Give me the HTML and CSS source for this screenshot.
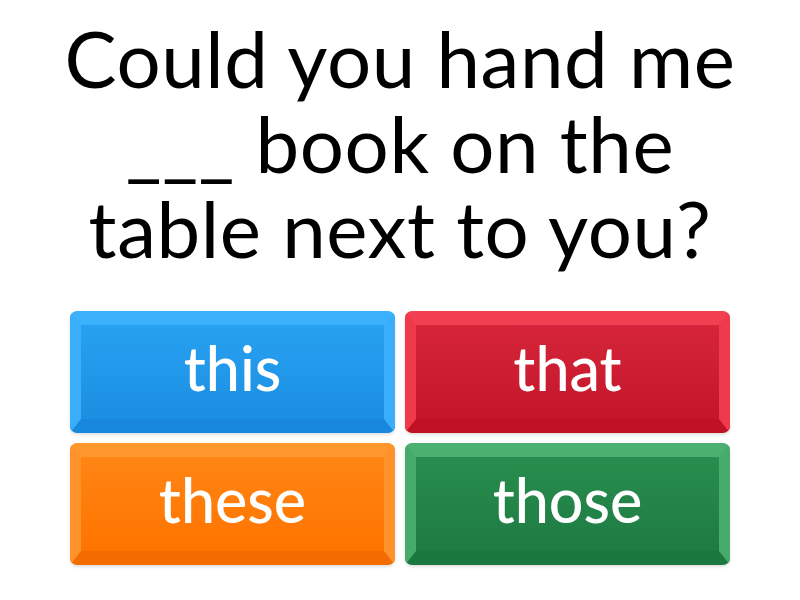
FILE: index.html
```html
<!DOCTYPE html>
<html lang="en">
<head>
<meta charset="utf-8">
<title>Quiz</title>
<link rel="stylesheet" href="styles.css">
</head>
<body>
<main class="quiz">
  <h1 class="question">Could you hand me<br>___ book on the<br>table next to you?</h1>
  <div class="answers">
    <button class="answer blue">this</button>
    <button class="answer red">that</button>
    <button class="answer orange">these</button>
    <button class="answer green">those</button>
  </div>
</main>
</body>
</html>
```
FILE: styles.css
```css
html, body {
  margin: 0;
  padding: 0;
  background: #ffffff;
}

.quiz {
  width: 800px;
  height: 600px;
  display: flex;
  flex-direction: column;
  align-items: center;
  font-family: Lato, "Noto Sans", sans-serif;
}

.question {
  margin: 16px 0 0;
  height: 295px;
  font-weight: 400;
  font-size: 78px;
  line-height: 85px;
  text-align: center;
  color: #000;
  letter-spacing: 0.6px;
}

.answers {
  display: grid;
  grid-template-columns: 325px 325px;
  grid-auto-rows: 122px;
  gap: 10px;
}

.answer {
  box-sizing: border-box;
  border-style: solid;
  border-width: 14px 11px 14px 11px;
  border-radius: 7px;
  padding: 0 0 10px;
  font-family: Lato, "Noto Sans", sans-serif;
  font-size: 61px;
  font-weight: 500;
  color: #fff;
  text-align: center;
  box-shadow: 0 2px 3px rgba(0, 0, 0, 0.12);
}

.blue {
  border-color: #3cb2fc #3aaefa #1788dc #3aaefa;
  background: linear-gradient(#28a1f1, #1b8fe2);
}

.red {
  border-color: #f23f51 #ee3a4c #c01225 #ee3a4c;
  background: linear-gradient(#d6253a, #c3162a);
}

.orange {
  border-color: #ff972c #ff922a #f26c00 #ff922a;
  background: linear-gradient(#ff8514, #ff7400);
}

.green {
  border-color: #4bb070 #47ab6b #1a773d #47ab6b;
  background: linear-gradient(#288d4e, #1e7b42);
}
```
